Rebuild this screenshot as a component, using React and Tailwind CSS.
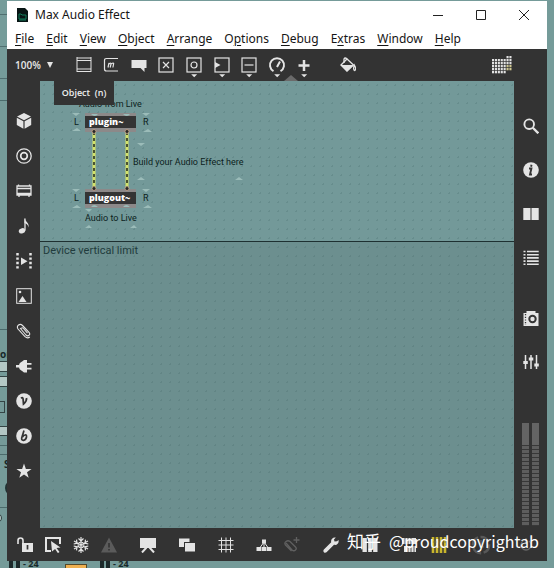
import React from "react";

const light = "#e4e4e4";

function Icon({ children, size = "size-4", box = "0 0 16 16" }) {
  return (
    <svg viewBox={box} className={`${size} shrink-0`} fill="none" stroke={light} strokeWidth="1.3" aria-hidden="true">
      {children}
    </svg>
  );
}

const solid = { fill: light, stroke: "none" };

function Tool({ label, className, children }) {
  return (
    <button type="button" aria-label={label} className={`relative flex shrink-0 items-center justify-center ${className}`}>
      {children}
    </button>
  );
}

const drop = <path d="M5.200 17.200h6l-3 3z" {...solid} />;

const topTools = [
  ["Object", <><path d="M1 0v15M15 0v15M1 1h14M1 3.5h14M1 12h14M1 14.5h14" strokeWidth="1" /></>],
  ["Message", <><path d="M15 1.5H3.5q-2 0-2 2v8.500q0 2 2 2H15" /><path d="M5 10.500l1-4.500M6 7q2-2 2 0l-.8 3.500M8 7q3-2 2.600 0l-.7 3.500" strokeWidth="1.200" /></>],
  ["Comment", <path d="M.5 3h15v8h-2v4l-4-4h-9z" {...solid} />],
  ["Toggle", <><rect x="1" y="1" width="14" height="14" /><path d="M5 5l6 6M11 5l-6 6" /></>],
  ["Button", <><rect x="1" y="1" width="14" height="14" /><circle cx="8" cy="8" r="3" />{drop}</>],
  ["Playback", <><rect x="1" y="1" width="14" height="14" /><path d="M1 5l5.500 3L1 11z" {...solid} />{drop}</>],
  ["Slider", <><rect x="1" y="1" width="14" height="14" /><path d="M3.500 8h9" />{drop}</>],
  ["Dial", <><path d="M4.500 14.200A7 7 0 1 1 11.500 14.200M8 10l3-5.500" strokeWidth="2" />{drop}</>],
  ["Add", <><path d="M8 3v11M2.500 8.500h11" strokeWidth="2.500" />{drop}</>],
];

const leftTools = [
  ["Packages", <><path d="M8 0l7 3.500-7 3.800L1 3.500zM.8 4.700l6.600 3.500v7.500L.8 12zM15.200 4.700L8.600 8.200v7.500l6.600-3.700z" {...solid} /></>],
  ["Audio", <><circle cx="8" cy="8" r="7.200" /><circle cx="8" cy="8" r="3.300" strokeWidth="1.700" /></>],
  ["Live devices", <><path d="M1 3h14v9H1zM1 5.500h14M1 10.500h14M3 12v2M13 12v2M2.500 1.500v2M13.500 1.500v2" /></>],
  ["Notes", <><path d="M9 .5v12" /><ellipse cx="6" cy="12.800" rx="3.300" ry="2.500" transform="rotate(-20 6 12.800)" {...solid} /><path d="M8.500 0c.5 4 5 4 4 9.500C12 6.500 10 5.500 8.500 5z" {...solid} /></>],
  ["Video", <><path d="M1.500 0v16M14.500 0v16" strokeWidth="2.500" strokeDasharray="2.400 2" /><path d="M5 4.500l6.500 3.800L5 12z" {...solid} /></>],
  ["Images", <><rect x=".7" y=".7" width="14.600" height="14.600" strokeWidth="1" /><path d="M2.500 14l4-6 4 6z" {...solid} /><circle cx="4" cy="4" r="1.300" {...solid} /></>],
  ["Files", <path d="M4 5l6 7q1.500 1.500 3 .3t0-3L6.500 2.500Q4.500.5 2.500 2T2 6l7 7.700q2.500 2.200 4.800.3M5.200 5.500q1-1.500 2.300 0l4 4.700" strokeWidth="1.100" />],
  ["Plug-ins", <path d="M0 7h3c.5-2.700 3-3.200 5-5h3v3h4.500v1.800H11v3h4.500v1.800H11v3H8c-2-1.800-4.500-2.300-5-5H0z" {...solid} />],
  ["Vizzie", <><circle cx="8" cy="8" r="7.800" {...solid} /><path d="M5 5.300q2-1.500 2.100 1L7.500 11Q11 8 10.500 5" stroke="#333" strokeWidth="1.800" /></>],
  ["BEAP", <><circle cx="8" cy="8" r="7.800" {...solid} /><path d="M8 2.500L5.700 10q-.4 2.500 1.800 2.300Q10 12 10.500 9q.3-2.500-1.500-2-1.500.3-2.500 2" stroke="#333" strokeWidth="1.700" /></>],
  ["Favorites", <path d="M8 .5l1.900 5.400h5.700L11 9.300l1.700 5.500L8 11.500l-4.700 3.300L5 9.300.4 5.900h5.700z" {...solid} />],
];

const rightTools = [
  ["Search", <><circle cx="6.200" cy="6.200" r="4.800" strokeWidth="1.900" /><path d="M9.800 9.800l5.500 5.500" strokeWidth="2.300" /></>],
  ["Inspector", <><circle cx="8" cy="8" r="7.800" {...solid} /><path d="M6 6.500h2.400L7 12.500h2M8.500 2.800l-.4 2" stroke="#333" strokeWidth="1.900" /></>],
  ["Reference", <><path d="M.3 2h7.200v12H.3zM8.500 2h7.200v12H8.500z" {...solid} /></>],
  ["Console", <><path d="M4 1.500h11.700M4 4.700h11.700M4 7.900h11.700M4 11.100h11.700M4 14.300h11.700" strokeWidth="1.600" /><path d="M.5 1.500h2M.5 4.700h2M.5 7.900h2M.5 11.100h2M.5 14.300h2" strokeWidth="1.600" /></>],
];

const rightLower = [
  ["Snapshots", <><path d="M.5 3h3V1h9v2h3v13H.5z" {...solid} /><circle cx="9.500" cy="9" r="3.200" stroke="#333" strokeWidth="2" /><path d="M2.500 4v11" stroke="#333" strokeDasharray="1.200 1.500" /></>],
  ["Parameters", <><path d="M2.500 1v14M8 1v14M13.500 1v14" strokeWidth="1.500" /><path d="M.3 7h4.500v3H.3zM5.800 3.500h4.500v3H5.800zM11.300 9.500h4.500v3h-4.500z" {...solid} /></>],
];

const bottomA = [
  ["Lock", <><path d="M1 7V3.500Q1 1 3.500 1T6 3.500V7" strokeWidth="1.600" /><path d="M5 6h11v9H5z" {...solid} /><path d="M10.500 8v4.500" stroke="#333" strokeWidth="1.700" /></>],
  ["Presentation select", <><path d="M6 14H1V1h14v6" strokeWidth="2" /><path d="M6 4l9.500 6.500-4 .6 3 4-1.600 1-2.800-4L7 14.500z" {...solid} /></>],
  ["Freeze", <><path d="M8 0v16M1 4l14 8M15 4L1 12M5.500 1.500L8 4l2.500-2.500M5.500 14.500L8 12l2.500 2.500M.7 7L4 6.200 3.500 2.700M15.300 7L12 6.200l.5-3.500M.7 9l3.300.8-.5 3.500M15.300 9l-3.300.8.5 3.500" strokeWidth="1.200" /><circle cx="8" cy="8" r="3" strokeWidth="1" /></>],
  ["Warnings", <><path d="M8 .5L16 15.500H0z" fill="#5b5b5b" stroke="none" /><path d="M8 6v4.500M8 12v1.500" stroke="#333" strokeWidth="1.600" /></>],
];

const bottomB = [
  ["Presentation", <><path d="M0 1h16v10H0z" {...solid} /><path d="M6.500 10.500l-4.500 5M9.500 10.500l4.500 5" strokeWidth="2" /></>],
  ["Layers", <><path d="M0 1.500h10.500V5H5v5H0z" {...solid} /><path d="M6 6h10v8.500H6z" {...solid} /></>],
  ["Grid", <path d="M3.500.5v15M8 .5v15M12.500.5v15M.5 3.500h15M.5 8h15M.5 12.500h15" strokeWidth="1" />],
];

const bottomC = [
  ["Hierarchy", <><path d="M8 4v7M8 5L3 12M8 5l5 7" strokeWidth="1" /><path d="M6 2.500h4v4H6zM.5 10h4.700v4H.5zM5.700 10h4.600v4H5.700zM10.800 10h4.700v4h-4.700z" {...solid} /></>],
  ["Add clip", <><path d="M2 6l6 7q2 1.500 3.500 0t0-3L6 4.500Q4 3 2 4.500T1.500 8l6 6M12.500 0v6M9.500 3h6" stroke="#606060" strokeWidth="1.300" /></>],
];

const bottomD = [
  ["Settings", <path d="M14 4.300l1.500-1.200c.8 3-1.500 5.500-4.500 4.700L3.500 15.300q-1.500 1-2.600-.1t0-2.600L8.200 5.200C7.500 2.500 9.800-.2 12.800.6L11 2.500l.5 2z" {...solid} />],
  ["Keyboard", <><path d="M.5 1h15v14H.5z" {...solid} /><path d="M5.500 1v14M10.500 1v14" stroke="#333" /></>],
  ["Scope", <><path d="M1 1h14v6H1zM3 9h12v6H3z" {...solid} /><path d="M4 1v6M7 1v14M10 1v14M13 9v6" stroke="#333" strokeWidth=".8" /></>],
];

const menus = [
  ["", "F", "ile"], ["", "E", "dit"], ["", "V", "iew"], ["", "O", "bject"], ["", "A", "rrange"],
  ["O", "p", "tions"], ["", "D", "ebug"], ["E", "x", "tras"], ["", "W", "indow"], ["", "H", "elp"],
];

function ObjectBox({ name, className }) {
  return (
    <div className={`absolute left-[45px] h-[19px] w-[51px] bg-[#8c8989] pt-[3px] ${className}`}>
      <div className="h-3 bg-[#343434] pl-1 font-['Open_Sans',sans-serif] text-[9px] leading-3 font-extrabold text-white">
        {name}
      </div>
    </div>
  );
}

function Cord({ className }) {
  return (
    <svg viewBox="0 0 6 62" className={`absolute top-[48px] h-[62px] w-[6px] ${className}`} aria-hidden="true">
      <path d="M3 2v58" stroke="#d4e36a" strokeWidth="3" />
      <path d="M3 3v56" stroke="#1e241c" strokeWidth="1.500" strokeDasharray="3 3" />
      <circle cx="3" cy="2.500" r="2" fill="#282828" stroke="#c9a58a" strokeWidth=".8" />
      <circle cx="3" cy="59.500" r="2" fill="#282828" stroke="#c9a58a" strokeWidth=".8" />
    </svg>
  );
}

function Canvas() {
  const note = "absolute whitespace-nowrap text-[9px] leading-3 text-[#0c1e20]";
  return (
    <main className="relative min-w-0 flex-1 overflow-hidden bg-[#739999] bg-[radial-gradient(circle,#678d8d_1px,transparent_1px)] bg-[size:9px_9px] font-[Roboto,sans-serif]">
      <div className="absolute inset-x-0 top-[160px] bottom-0 border-t border-[#1e3031] bg-[#4f6868]/20" />
      <p className={`${note} left-[39px] top-[17px]`}>Audio from Live</p>
      <p className={`${note} left-[34px] top-[35px]`}>L</p>
      <p className={`${note} left-[103px] top-[35px]`}>R</p>
      <p className={`${note} left-[34px] top-[111px]`}>L</p>
      <p className={`${note} left-[103px] top-[111px]`}>R</p>
      <p className={`${note} left-[93px] top-[75px]`}>Build your Audio Effect here</p>
      <p className={`${note} left-[45px] top-[131px]`}>Audio to Live</p>
      <p className="absolute left-[3px] top-[164px] text-[11px] leading-3 whitespace-nowrap text-[#213b3c]">Device vertical limit</p>
      <ObjectBox name="plugin~" className="top-[32px]" />
      <ObjectBox name="plugout~" className="top-[108px]" />
      <Cord className="left-[51px]" />
      <Cord className="left-[84px]" />
      <svg viewBox="0 0 220 160" className="absolute left-0 top-0 h-[160px] w-[220px]" fill="#9bbcb9" aria-hidden="true">
        <path d="M32 32h8l-4 3zM32 50h9l-4-3zM102 32h8l-4 3zM103 51h9l-4-3zM32 108h8l-4 3zM32 127h9l-4-3zM102 108h8l-4 3zM103 127h9l-4-3zM97 62h8l-4 3zM97 99h8l-4-3zM195 99h8l-4-3zM45 128h7l-3 3zM45 147h7l-3-3zM90 147h7l-3-3z" />
        <path d="M51 33h7q-3 4-7 0zM83 33h7q-3 4-7 0zM51 126q3-4 7 0zM83 126q3-4 7 0z" />
      </svg>
      <div role="tooltip" className="absolute left-[14px] top-0 flex h-6 w-[60px] items-center justify-center bg-[#333] font-['Open_Sans',sans-serif] text-[9px] font-semibold whitespace-nowrap text-[#eee]">
        Object&nbsp; (n)
      </div>
    </main>
  );
}

function Backdrop() {
  return (
    <div aria-hidden="true" className="absolute inset-0 font-['Open_Sans',sans-serif] text-[10px] leading-3 font-bold text-[#16292a]">
      <div className="absolute left-0 top-0 h-[101px] w-[7px] border-b border-[#4b6c6c] bg-[repeating-linear-gradient(#759c9a_0_14px,#506f70_14px_15px,#759c9a_15px_32px)]" />
      <div className="absolute left-0 top-[329px] h-5 w-[7px] border-t border-[#4b6c6c]" />
      <span className="absolute left-0 top-[348px]">or</span>
      <div className="absolute left-0 top-[361px] h-[11px] w-[7px] border-y border-[#344] bg-[#b4c8c5]" />
      <div className="absolute left-0 top-[376px] h-[11px] w-[7px] border-y border-[#344] bg-[#b4c8c5]" />
      <div className="absolute -left-1 top-[401px] h-[12px] w-[9px] border border-[#344]" />
      <div className="absolute left-0 top-[426px] h-[10px] w-[7px] border-y border-[#344] bg-[#b4c8c5]" />
      <div className="absolute left-0 top-[445px] h-[10px] w-[7px] border-y border-[#4b6c6c]" />
      <span className="absolute left-1 top-[458px]">S</span>
      <div className="absolute left-[5px] top-[480px] h-4 w-4 rounded-full border-2 border-[#233]" />
      <div className="absolute left-0 top-[507px] h-1 w-[7px] border-t border-[#4b6c6c]" />
      <div className="absolute -left-2 top-[513px] size-[10px] rounded-full border border-[#344] bg-[#b4c8c5]" />
      <div className="absolute bottom-0 left-0 flex h-2 w-full items-end text-[9px] leading-[8px]">
        <div className="ml-[9px] h-2 w-[11px] border-x-4 border-[#1d2a2b]" />
        <span className="w-7 pl-[3px] whitespace-nowrap">- 24</span>
        <div className="ml-[17px] h-1 w-[22px] border border-b-0 border-[#554a2a] bg-[#efb050]" />
        <div className="ml-[13px] h-2 w-[10px] border-x-4 border-[#1d2a2b]" />
        <span className="w-7 pl-[3px] whitespace-nowrap">- 24</span>
      </div>
    </div>
  );
}

function Row({ items, className }) {
  return items.map(([label, art]) => (
    <Tool key={label} label={label} className={className}><Icon>{art}</Icon></Tool>
  ));
}

export default function App() {
  return (
    <div className="relative flex h-screen flex-col overflow-hidden bg-[#759b99] px-[7px] pt-px pb-[7px]">
      <Backdrop />
      <div className="relative flex min-h-0 flex-1 flex-col bg-[#333]">
        <header className="bg-white font-['Noto_Sans',sans-serif] text-xs text-[#151515]">
          <div className="flex h-[27px] items-center pr-[2px] pl-[10px]">
            <svg viewBox="0 0 12 14" className="h-[14px] w-3" aria-hidden="true">
              <path d="M0 0h8l3 3v11H0z" fill="#071414" />
              <path d="M2 11V6h2l1 1h4v4zM2 12h7" fill="none" stroke="#117b58" />
            </svg>
            <h1 className="flex-1 pl-[6px]">Max Audio Effect</h1>
            <Tool label="Minimize" className="w-[43px]"><svg viewBox="0 0 10 10" className="size-[10px]" stroke="#222"><path d="M0 5.500h10" /></svg></Tool>
            <Tool label="Maximize" className="w-[43px]"><svg viewBox="0 0 10 10" className="size-[10px]" fill="none" stroke="#222"><path d="M.5.5h9v9h-9z" /></svg></Tool>
            <Tool label="Close" className="w-[43px]"><svg viewBox="0 0 10 10" className="size-[10px]" stroke="#222"><path d="M0 0l10 10M10 0L0 10" /></svg></Tool>
          </div>
          <nav className="flex h-[21px] items-center gap-3 pl-2">
            {menus.map(([a, key, b]) => (
              <button type="button" key={a + key + b}>{a}<span className="underline underline-offset-2">{key}</span>{b}</button>
            ))}
          </nav>
        </header>

        <div className="relative flex h-8 shrink-0 items-center pl-2 font-['Open_Sans',sans-serif] text-[#e8e8e8]">
          <button type="button" className="flex w-[55px] items-center gap-[6px] text-[10px] font-semibold">
            100%
            <svg viewBox="0 0 6 6" className="size-[6px]" fill={light} aria-hidden="true"><path d="M0 0h6L3 6z" /></svg>
          </button>
          <div className="grid w-[248px] grid-cols-9">
            {topTools.map(([label, art]) => (
              <Tool key={label} label={label} className="h-8">
                <svg viewBox="0 0 16 16" className="size-4 overflow-visible" fill="none" stroke={light} strokeWidth="1.200" aria-hidden="true">{art}</svg>
              </Tool>
            ))}
          </div>
          <Tool label="Format" className="ml-[10px] w-10">
            <Icon>
              <path d="M1 8l6-6 6.500 6L7 14z" />
              <path d="M.5 8h13L7 14.500z" {...solid} />
              <path d="M7 2q-2-2-3 0v4M14.300 8q2.500 4 .5 5.500-2-.5-.5-5.500z" />
            </Icon>
          </Tool>
          <div className="flex-1" />
          <Tool label="Toolbars" className="mr-[34px] w-[22px]">
            <svg viewBox="0 0 20 18" className="h-[18px] w-5" fill="#dedbd0" aria-hidden="true">
              {[0, 1, 2, 3, 4, 5].map((r) => [0, 1, 2, 3, 4, 5, 6].map((c) =>
                (r > 0 || c > 4) && (r < 5 || c < 5) ? (
                  <rect key={`${r}-${c}`} x={c * 2.9} y={r * 3} width="2.100" height="2.300" fill={c > 4 && r > 2 ? "#cfc892" : "#e2e2e2"} />
                ) : null))}
            </svg>
          </Tool>
          <div className="absolute bottom-0 left-[277px] h-[6px] w-[14px] bg-[#6a6a6a] [clip-path:polygon(50%_0,100%_100%,0_100%)]" />
        </div>

        <div className="flex min-h-0 flex-1">
          <aside className="flex w-[33px] shrink-0 flex-col pt-[22px]">
            <Row items={leftTools} className="h-[35px]" />
          </aside>
          <Canvas />
          <aside className="flex w-[33px] shrink-0 flex-col pt-[23px]">
            <Row items={rightTools} className="h-11" />
            <div className="h-4" />
            <Row items={rightLower} className="h-11" />
            <div className="mt-auto mb-[2px] flex h-[103px] justify-center gap-[3px]">
              {[0, 1].map((n) => (
                <div key={n} className="flex w-[7px] flex-col">
                  <div className="h-[22px] bg-[#646464]" />
                  <div className="flex-1 bg-[repeating-linear-gradient(#383838_0_1px,#5e5e5e_1px_4px)]" />
                </div>
              ))}
            </div>
          </aside>
        </div>

        <footer className="relative flex h-[33px] shrink-0 items-center pl-1">
          <Row items={bottomA} className="w-7" />
          <div className="w-[5px]" />
          <Row items={bottomB} className="w-[39px]" />
          <div className="w-[5px]" />
          <Row items={bottomC} className="w-7" />
          <div className="w-[5px]" />
          <Row items={bottomD} className="w-[39px]" />
          <Tool label="Pattern" className="w-[22px]"><Icon><path d="M2 0v16M6 0v16M10 0v16M14 0v16" stroke="#c9b62d" strokeWidth="2.600" /><path d="M0 5h16M0 10h16" stroke="#77702f" strokeWidth=".8" /></Icon></Tool>
          <div className="w-[11px]" />
          <Tool label="Target" className="w-10"><Icon size="size-5"><circle cx="8" cy="8" r="6.500" stroke="#585858" strokeDasharray="8 2" strokeWidth="2" /><path d="M8 4v4l2 2" stroke="#585858" /></Icon></Tool>
          <div className="w-[5px]" />
          <Tool label="Power" className="w-10"><Icon><path d="M5 4a5 5 0 1 0 6 0M8 1v6" stroke="#686868" /></Icon></Tool>
          <p className="absolute right-2 bottom-[6px] flex items-baseline gap-2 font-['Noto_Sans_CJK_SC',sans-serif] text-base leading-7 whitespace-nowrap text-white">
            <span className="text-[17px]">知乎</span>
            <span>@proudcopyrightab</span>
          </p>
        </footer>
      </div>
    </div>
  );
}
